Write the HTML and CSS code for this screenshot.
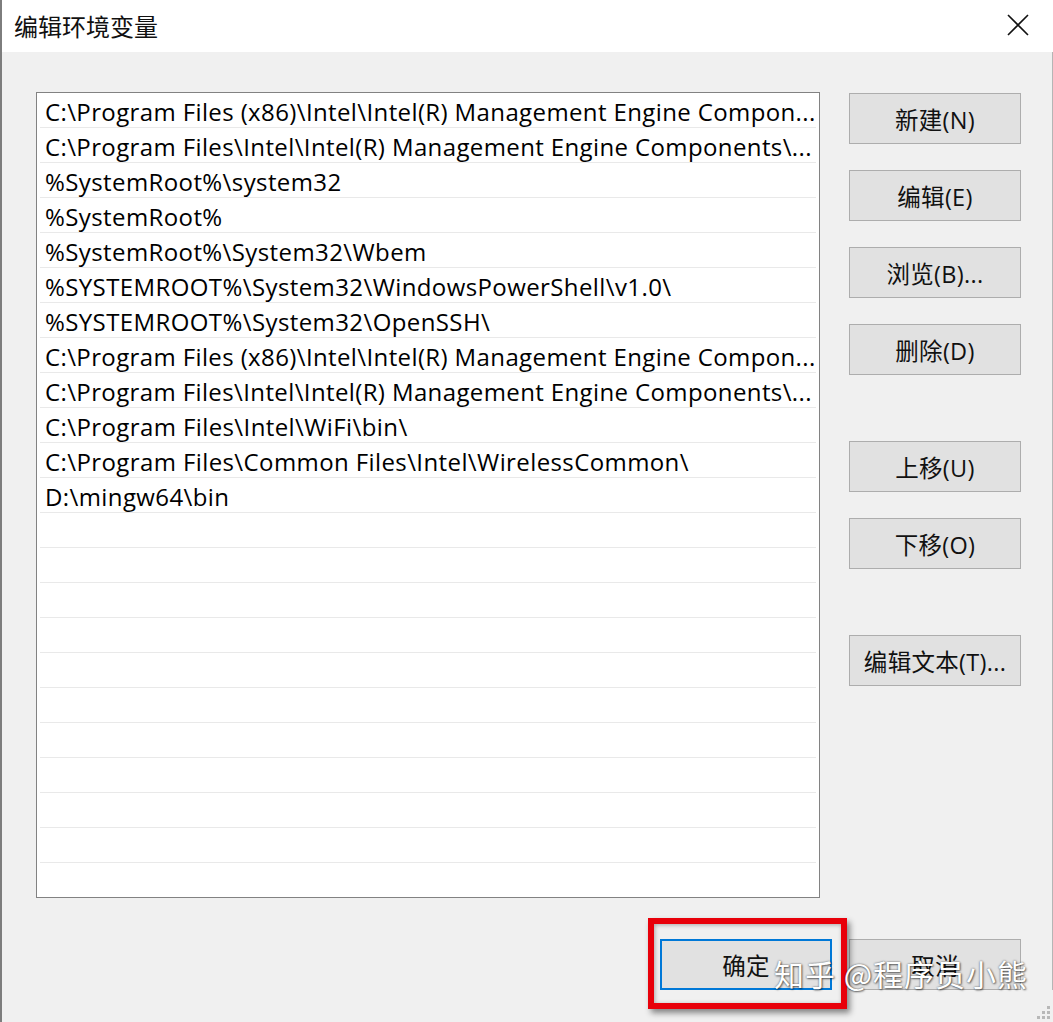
FILE: index.html
```html
<!DOCTYPE html>
<html lang="zh-CN">
<head>
    <meta charset="UTF-8">
    <meta name="viewport" content="width=device-width, initial-scale=1.0">
    <title>编辑环境变量</title>
    <link rel="stylesheet" href="styles.css">
</head>
<body>
    <div class="window">
        <div class="titlebar">
            <span class="title">编辑环境变量</span>
            <span class="close">
                <svg width="22" height="22" viewBox="0 0 22 22">
                    <path d="M1 1 L21 21 M21 1 L1 21" stroke="#111" stroke-width="1.6" fill="none"/>
                </svg>
            </span>
        </div>

        <div class="body">
            <div class="main">
                <div class="path-list">
                    <div class="row tight">C:\Program Files (x86)\Intel\Intel(R) Management Engine Compon...</div>
                    <div class="row tight">C:\Program Files\Intel\Intel(R) Management Engine Components\...</div>
                    <div class="row">%SystemRoot%\system32</div>
                    <div class="row">%SystemRoot%</div>
                    <div class="row">%SystemRoot%\System32\Wbem</div>
                    <div class="row">%SYSTEMROOT%\System32\WindowsPowerShell\v1.0\</div>
                    <div class="row">%SYSTEMROOT%\System32\OpenSSH\</div>
                    <div class="row tight">C:\Program Files (x86)\Intel\Intel(R) Management Engine Compon...</div>
                    <div class="row tight">C:\Program Files\Intel\Intel(R) Management Engine Components\...</div>
                    <div class="row">C:\Program Files\Intel\WiFi\bin\</div>
                    <div class="row">C:\Program Files\Common Files\Intel\WirelessCommon\</div>
                    <div class="row">D:\mingw64\bin</div>
                    <div class="row"></div>
                    <div class="row"></div>
                    <div class="row"></div>
                    <div class="row"></div>
                    <div class="row"></div>
                    <div class="row"></div>
                    <div class="row"></div>
                    <div class="row"></div>
                    <div class="row"></div>
                    <div class="row"></div>
                    <div class="row last"></div>
                </div>

                <div class="side">
                    <div class="btn-group">
                        <button class="btn">新建(N)</button>
                        <button class="btn">编辑(E)</button>
                        <button class="btn">浏览(B)...</button>
                        <button class="btn">删除(D)</button>
                    </div>
                    <div class="btn-group">
                        <button class="btn">上移(U)</button>
                        <button class="btn">下移(O)</button>
                    </div>
                    <div class="btn-group">
                        <button class="btn">编辑文本(T)...</button>
                    </div>
                </div>
            </div>

            <div class="footer">
                <div class="ok-wrap">
                    <button class="btn btn-ok">确定</button>
                    <span class="mark"></span>
                </div>
                <button class="btn">取消</button>
            </div>
        </div>

        <div class="watermark">知乎 @程序员小熊</div>
        <div class="grip">
            <svg width="16" height="16" viewBox="0 0 16 16" fill="#b8b8b8">
                <rect x="12" y="2" width="3" height="3"/>
                <rect x="7" y="7" width="3" height="3"/>
                <rect x="12" y="7" width="3" height="3"/>
                <rect x="2" y="12" width="3" height="3"/>
                <rect x="7" y="12" width="3" height="3"/>
                <rect x="12" y="12" width="3" height="3"/>
            </svg>
        </div>
    </div>
</body>
</html>
```

FILE: styles.css
```css
body {
    margin: 0;
    font-family: "Open Sans", "Noto Sans CJK SC", sans-serif;
    background: #f0f0f0;
}
.window {
    position: relative;
    width: 1053px;
    height: 1022px;
    box-sizing: border-box;
    border-left: 2px solid #7d7d7d;
    background: #f0f0f0;
    overflow: hidden;
}
.titlebar {
    height: 52px;
    background: #fff;
    display: flex;
    align-items: center;
    justify-content: space-between;
    padding: 0 24px 0 12px;
}
.title {
    font-family: "Noto Sans CJK SC", sans-serif;
    font-size: 24px;
    color: #111;
    margin-top: -2px;
}
.close {
    display: flex;
    margin-top: -2px;
}
.body {
    padding: 40px 31px 0 34px;
    border-right: 1px solid #b5b5b5;
}
.main {
    display: flex;
    gap: 29px;
}
.path-list {
    width: 784px;
    height: 806px;
    box-sizing: border-box;
    border: 1px solid #828282;
    background: #fff;
    overflow: hidden;
}
.row {
    height: 35px;
    box-sizing: border-box;
    margin: 0 3px;
    padding: 0 0 0 5px;
    border-bottom: 1px solid #e9e9e9;
    font-size: 24px;
    letter-spacing: 0.4px;
    line-height: 37px;
    color: #000;
    white-space: nowrap;
}
.row.tight {
    letter-spacing: 0.38px;
}
.row.last {
    border-bottom: none;
}
.side {
    display: flex;
    flex-direction: column;
    gap: 66px;
    padding-top: 1px;
}
.btn-group {
    display: flex;
    flex-direction: column;
    gap: 26px;
}
.btn {
    width: 172px;
    height: 51px;
    box-sizing: border-box;
    background: #e1e1e1;
    border: 1px solid #adadad;
    font-family: "Open Sans", "Noto Sans CJK SC", sans-serif;
    font-size: 23.5px;
    letter-spacing: 0.3px;
    color: #111;
    padding: 0;
}
.footer {
    display: flex;
    justify-content: flex-end;
    gap: 17px;
    margin-top: 41px;
}
.ok-wrap {
    position: relative;
}
.btn-ok {
    border: 2px solid #0078d7;
}
.mark {
    position: absolute;
    left: -12px;
    top: -21px;
    right: -15px;
    bottom: -19px;
    border: 6px solid #e8000a;
    box-shadow: 3px 4px 6px rgba(0, 0, 0, 0.45), inset 1px 1px 4px rgba(0, 0, 0, 0.3);
}
.watermark {
    position: absolute;
    left: 772px;
    top: 951px;
    font-family: "Noto Sans CJK SC", sans-serif;
    font-size: 30px;
    color: #fff;
    text-shadow: 0 0 2px rgba(0, 0, 0, 0.6), 1px 1px 2px rgba(0, 0, 0, 0.5);
    letter-spacing: 1px;
}
.grip {
    position: absolute;
    right: 2px;
    bottom: 2px;
    display: flex;
}
```
